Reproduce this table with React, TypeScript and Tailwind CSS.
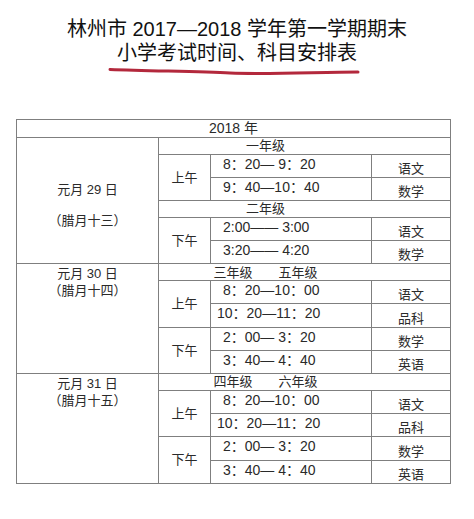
const font = { fontFamily: '"Liberation Sans", "Noto Sans CJK SC", sans-serif' }

type Slot = { time: string; pad: string; subject: string }
type Half = { label: string; slots: Slot[] }
type Block = { date: string; lunar: string; groups: { grade: string; halves: Half[] }[]; spread?: boolean }

const blocks: Block[] = [
  {
    date: '元月 29 日',
    lunar: '（腊月十三）',
    spread: true,
    groups: [
      {
        grade: '一年级',
        halves: [
          {
            label: '上午',
            slots: [
              { time: '8：20— 9：20', pad: 'pl-[12px]', subject: '语文' },
              { time: '9：40—10：40', pad: 'pl-[12px]', subject: '数学' },
            ],
          },
        ],
      },
      {
        grade: '二年级',
        halves: [
          {
            label: '下午',
            slots: [
              { time: '2:00—— 3:00', pad: 'pl-[12px]', subject: '语文' },
              { time: '3:20—— 4:20', pad: 'pl-[12px]', subject: '数学' },
            ],
          },
        ],
      },
    ],
  },
  {
    date: '元月 30 日',
    lunar: '（腊月十四）',
    groups: [
      {
        grade: '三年级\u3000\u3000五年级',
        halves: [
          {
            label: '上午',
            slots: [
              { time: '8：20—10：00', pad: 'pl-[12px]', subject: '语文' },
              { time: '10：20—11：20', pad: 'pl-[6px]', subject: '品科' },
            ],
          },
          {
            label: '下午',
            slots: [
              { time: '2：00— 3：20', pad: 'pl-[12px]', subject: '数学' },
              { time: '3：40— 4：40', pad: 'pl-[12px]', subject: '英语' },
            ],
          },
        ],
      },
    ],
  },
  {
    date: '元月 31 日',
    lunar: '（腊月十五）',
    groups: [
      {
        grade: '四年级\u3000\u3000六年级',
        halves: [
          {
            label: '上午',
            slots: [
              { time: '8：20—10：00', pad: 'pl-[12px]', subject: '语文' },
              { time: '10：20—11：20', pad: 'pl-[6px]', subject: '品科' },
            ],
          },
          {
            label: '下午',
            slots: [
              { time: '2：00— 3：20', pad: 'pl-[12px]', subject: '数学' },
              { time: '3：40— 4：40', pad: 'pl-[12px]', subject: '英语' },
            ],
          },
        ],
      },
    ],
  },
]

const cell = 'border border-[#7f7f7f] p-0'

function rowCount(b: Block) {
  return b.groups.reduce((n, g) => n + 1 + g.halves.reduce((m, h) => m + h.slots.length, 0), 0)
}

function BlockRows({ block }: { block: Block }) {
  const rows: React.ReactNode[] = []
  let first = true
  block.groups.forEach((g, gi) => {
    rows.push(
      <tr key={`g${gi}`} className="h-[16.6px]">
        {first && (
          <td rowSpan={rowCount(block)} className={`${cell} align-top text-center text-[13px]`}>
            {block.spread ? (
              <div className="flex flex-col items-center pt-[43px] gap-[13px] leading-[18px]">
                <span>{block.date}</span>
                <span>{block.lunar}</span>
              </div>
            ) : (
              <div className="flex flex-col items-center pt-[1px] leading-[17px]">
                <span>{block.date}</span>
                <span>{block.lunar}</span>
              </div>
            )}
          </td>
        )}
        <td colSpan={3} className={`${cell} text-[13px] leading-[15px] text-center pr-[78px] whitespace-pre`}>
          {g.grade}
        </td>
      </tr>
    )
    first = false
    g.halves.forEach((h, hi) =>
      h.slots.forEach((s, si) =>
        rows.push(
          <tr key={`g${gi}h${hi}s${si}`} className="h-[23.3px]">
            {si === 0 && (
              <td rowSpan={h.slots.length} className={`${cell} text-center text-[13px]`}>
                {h.label}
              </td>
            )}
            <td className={`${cell} ${s.pad} align-top text-[14px] leading-[18px] whitespace-pre`}>{s.time}</td>
            <td className={`${cell} align-bottom text-center text-[13px] leading-[16px]`}>{s.subject}</td>
          </tr>
        )
      )
    )
  })
  return <>{rows}</>
}

export default function App() {
  return (
    <div className="w-[474px] h-[519px] bg-white text-[#111]" style={font}>
      <div className="pt-[17px] flex flex-col items-center text-[20px] leading-[24px]">
        <div>林州市 2017—2018 学年第一学期期末</div>
        <div>小学考试时间、科目安排表</div>
      </div>
      <svg width="474" height="12" className="block mt-[-1px]" viewBox="0 0 474 12">
        <path
          d="M110 5.5 C150 7, 200 7.5, 230 9 C270 10.5, 320 8, 358 8"
          stroke="#b3283c"
          strokeWidth="3"
          strokeLinecap="round"
          fill="none"
        />
      </svg>
      <table className="ml-[16px] mt-[43px] w-[434px] table-fixed border-collapse text-[#2a2a2a]">
        <colgroup>
          <col className="w-[142px]" />
          <col className="w-[52px]" />
          <col className="w-[161px]" />
          <col className="w-[79px]" />
        </colgroup>
        <tbody>
          <tr className="h-[18px]">
            <td colSpan={4} className={`${cell} text-center text-[14px] leading-[17px]`}>
              2018 年
            </td>
          </tr>
          {blocks.map((b, i) => (
            <BlockRows key={i} block={b} />
          ))}
        </tbody>
      </table>
    </div>
  )
}
